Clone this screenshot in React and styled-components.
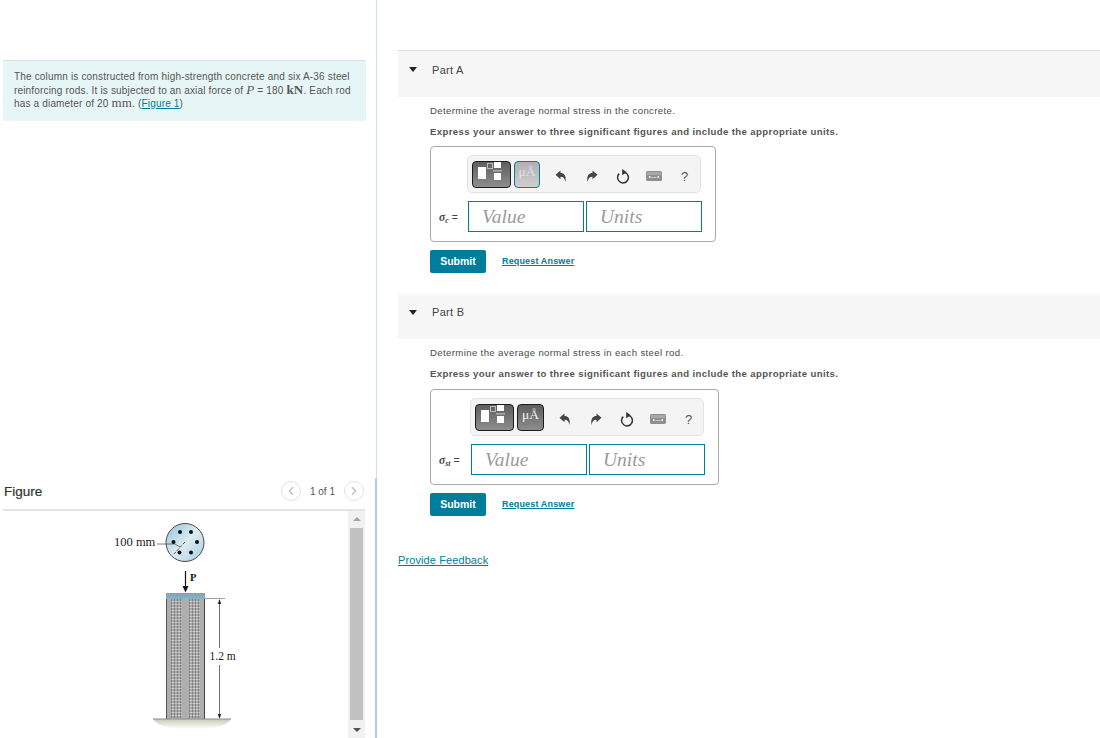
import React from "react";
import styled, { createGlobalStyle } from "styled-components";
import { ChevronLeft, ChevronRight } from "lucide-react";

const GlobalStyle = createGlobalStyle`
  html, body { margin: 0; padding: 0; background: #fff; }
  body { font-family: "Liberation Sans", Arial, sans-serif; color: #565656; }
`;

const Page = styled.div`
  display: flex;
  width: 1100px;
  height: 738px;
  overflow: hidden;
`;

const LeftPanel = styled.div`
  width: 377px;
  flex: none;
  display: flex;
  flex-direction: column;
`;

const IntroArea = styled.div`
  flex: 1;
  padding: 60px 10px 0 3px;
  border-right: 1px solid #d3e0ea;
`;

const Intro = styled.div`
  background: #e6f5f5;
  border-top: 1px solid #d5e3e6;
  height: 61px;
  box-sizing: border-box;
  padding: 9px 10px 0 11px;
  font-size: 10px;
  line-height: 13.5px;
  letter-spacing: 0.17px;
  white-space: nowrap;
`;

const MathSerif = styled.span`
  font-family: "Liberation Serif", serif;
  font-size: 13px;
  line-height: 0;
  font-style: ${(p) => (p.$italic ? "italic" : "normal")};
  font-weight: ${(p) => (p.$bold ? 700 : 400)};
`;

const TextLink = styled.a`
  color: #007c9c;
  text-decoration: underline;
`;

const FigureSection = styled.div`
  height: 260px;
  flex: none;
  box-sizing: border-box;
  padding-left: 3px;
  padding-right: 10px;
  border-right: 2px solid #b9cde0;
  display: flex;
  flex-direction: column;
`;

const FigureHeader = styled.div`
  height: 33px;
  flex: none;
  box-sizing: border-box;
  border-bottom: 2px solid #e4e4e4;
  display: flex;
  align-items: center;
  justify-content: space-between;
  padding: 0 1px 5px 1px;
`;

const FigureTitle = styled.div`
  font-size: 13.5px;
  font-weight: 400;
  color: #333;
  -webkit-text-stroke: 0.2px #333;
`;

const Pager = styled.div`
  display: flex;
  align-items: center;
  gap: 9px;
  font-size: 10px;
  color: #565656;
`;

const PagerButton = styled.div`
  width: 20px;
  height: 20px;
  border: 1px solid #e2e2e2;
  border-radius: 50%;
  box-sizing: border-box;
  display: flex;
  align-items: center;
  justify-content: center;
  color: #bdbdbd;
`;

const FigureBody = styled.div`
  flex: 1;
  display: flex;
  min-height: 0;
`;

const FigureView = styled.div`
  flex: 1;
  min-width: 0;
`;

const FigureSvg = styled.svg`
  display: block;
  width: 345px;
  height: 227px;
`;

const Scrollbar = styled.div`
  width: 17px;
  flex: none;
  background: #f1f1f1;
  display: flex;
  flex-direction: column;
  align-items: center;
  padding-top: 6px;
  box-sizing: border-box;
`;

const ScrollArrow = styled.div`
  width: 0;
  height: 0;
  border-left: 4px solid transparent;
  border-right: 4px solid transparent;
  border-bottom: ${(p) => (p.$down ? "none" : "4px solid #a3a3a3")};
  border-top: ${(p) => (p.$down ? "4px solid #505050" : "none")};
`;

const ScrollThumb = styled.div`
  width: 13px;
  height: 192px;
  background: #c1c1c1;
  margin: 7px 0 8px;
`;

const RightPanel = styled.div`
  flex: 1;
  padding: 50px 0 0 21px;
  min-width: 0;
`;

const PartHeader = styled.div`
  height: ${(p) => p.$height}px;
  box-sizing: border-box;
  background: #f7f7f7;
  border-top: ${(p) => (p.$ruled ? "1px solid #dcdcdc" : "none")};
  display: flex;
  align-items: center;
  padding: 0 0 9px 11px;
  font-size: 11px;
  letter-spacing: 0.3px;
  color: #444;
`;

const Caret = styled.div`
  width: 0;
  height: 0;
  border-left: 4px solid transparent;
  border-right: 4px solid transparent;
  border-top: 5px solid #222;
  margin-right: 15px;
`;

const PartBody = styled.div`
  padding: 7px 0 0 32px;
  height: ${(p) => p.$height}px;
  box-sizing: border-box;
`;

const Prompt = styled.div`
  font-size: 9.6px;
  line-height: 13px;
  letter-spacing: 0.37px;
  color: #4a4a4a;
`;

const Instruction = styled(Prompt)`
  margin-top: 8px;
  font-weight: 700;
  color: #555;
  letter-spacing: 0.385px;
`;

const AnswerBox = styled.div`
  display: inline-grid;
  grid-template-columns: auto 235px;
  column-gap: 8px;
  row-gap: 8px;
  align-items: center;
  margin-top: ${(p) => p.$top}px;
  padding: 8px 13px 9px 8px;
  border: 1px solid #aaa;
  border-radius: 4px;
`;

const Toolbar = styled.div`
  grid-column: 2;
  width: 234px;
  height: 38px;
  box-sizing: border-box;
  background: #f4f4f4;
  border: 1px solid #e3e3e3;
  border-radius: 5px;
  display: flex;
  align-items: center;
  padding-left: 4px;
`;

const TemplateButton = styled.div`
  width: 39px;
  height: 27px;
  flex: none;
  box-sizing: border-box;
  border: 1px solid #1c1c1c;
  border-radius: 4px;
  background: linear-gradient(#5e5e5e, #8d8d8d);
  display: flex;
  align-items: center;
  justify-content: center;
`;

const SymbolButton = styled.div`
  width: ${(p) => (p.$active ? 27 : 26)}px;
  height: 27px;
  flex: none;
  margin-left: 3px;
  box-sizing: border-box;
  border: 1px solid ${(p) => (p.$active ? "#1c1c1c" : "#007c9c")};
  border-radius: 4px;
  background: ${(p) =>
    p.$active ? "linear-gradient(#5e5e5e, #8d8d8d)" : "linear-gradient(#b0b0b0, #cfcfcf)"};
  color: ${(p) => (p.$active ? "#f2f2f2" : "#e2e2e2")};
  font-family: "Liberation Serif", serif;
  font-size: 13.5px;
  line-height: 20px;
  text-align: center;
`;

const ToolIcons = styled.div`
  display: grid;
  flex: none;
  grid-template-columns: repeat(5, 31px);
  justify-items: center;
  align-items: center;
  margin-left: 5px;
  padding-top: 4px;
`;

const HelpMark = styled.span`
  font-size: 13px;
  color: #555;
`;

const SymbolLabel = styled.div`
  width: ${(p) => p.$width}px;
  font-family: "Liberation Serif", serif;
  font-size: 11.5px;
  font-style: italic;
  color: #444;
  white-space: nowrap;
  font-weight: 700;
`;

const SymbolSub = styled.sub`
  font-size: 8px;
  vertical-align: -2px;
  line-height: 0;
`;

const Equals = styled.span`
  font-family: "Liberation Sans", sans-serif;
  font-style: normal;
  font-weight: 400;
  font-size: 10.5px;
`;

const Inputs = styled.div`
  display: flex;
  gap: 2px;
  margin-left: 1px;
`;

const FieldBox = styled.div`
  width: 116px;
  height: 31px;
  box-sizing: border-box;
  border: 1px solid #007c9c;
  padding-left: 13px;
  font-family: "Liberation Serif", serif;
  font-style: italic;
  font-size: 19.5px;
  line-height: 29px;
  color: #9a9a9a;
`;

const Actions = styled.div`
  display: flex;
  align-items: center;
  margin-top: 8px;
  gap: 16px;
`;

const SubmitButton = styled.div`
  width: 56px;
  height: 23px;
  background: #007c9c;
  border-radius: 2px;
  color: #fff;
  font-size: 10.5px;
  font-weight: 700;
  line-height: 23px;
  text-align: center;
`;

const RequestLink = styled(TextLink)`
  font-size: 9px;
  font-weight: 700;
  letter-spacing: 0.15px;
  margin-top: -2px;
`;

const Feedback = styled(TextLink)`
  display: block;
  font-size: 11px;
  letter-spacing: 0.1px;
`;

const TemplateIcon = () => (
  <svg width="37" height="25" viewBox="0 0 37 25">
    <rect x="5" y="5" width="8" height="12" fill="#fff" />
    <rect x="14.5" y="1.5" width="5" height="5" fill="none" stroke="#bbb" />
    <rect x="21" y="0" width="7" height="6" fill="#fff" />
    <rect x="20" y="8" width="9" height="1.5" fill="#aaa" />
    <rect x="21" y="11" width="7" height="7" fill="#fff" />
  </svg>
);

const UndoIcon = ({ flip }) => (
  <svg width="12" height="13" viewBox="0 0 12 13" style={flip ? { transform: "scaleX(-1)" } : undefined}>
    <path d="M0.5 4.8 L5.5 0.5 V3 C9 3 11.5 5.5 10.5 12 C9.8 8.5 8.5 6.8 5.5 6.8 V9.2 Z" fill="#444" />
  </svg>
);

const ResetIcon = () => (
  <svg width="14" height="15" viewBox="0 0 14 15">
    <path d="M8.8 3.4 A5.4 5.4 0 1 1 3.2 4.6" fill="none" stroke="#333" strokeWidth="1.5" />
    <path d="M6.2 0 L10.8 3.2 L6.2 6.2 Z" fill="#333" />
  </svg>
);

const KeyboardIcon = () => (
  <svg width="16" height="10" viewBox="0 0 16 10">
    <rect x="0" y="0" width="16" height="10" rx="1.5" fill="#8f8f8f" />
    <rect x="1" y="1" width="14" height="3" fill="#a8a8a8" />
    <rect x="3" y="5" width="1.5" height="2" fill="#eee" />
    <rect x="5.5" y="6" width="5" height="1" fill="#ccc" />
    <rect x="11.5" y="5" width="1.5" height="2" fill="#eee" />
  </svg>
);

const AnswerPart = ({ symbol, sub, labelWidth, boxTop, prompt, active }) => (
  <>
    <Prompt>{prompt}</Prompt>
    <Instruction>Express your answer to three significant figures and include the appropriate units.</Instruction>
    <AnswerBox $top={boxTop}>
      <Toolbar>
        <TemplateButton><TemplateIcon /></TemplateButton>
        <SymbolButton $active={active}>μÅ</SymbolButton>
        <ToolIcons>
          <UndoIcon />
          <UndoIcon flip />
          <ResetIcon />
          <KeyboardIcon />
          <HelpMark>?</HelpMark>
        </ToolIcons>
      </Toolbar>
      <SymbolLabel $width={labelWidth}>
        {symbol}<SymbolSub>{sub}</SymbolSub> <Equals>=</Equals>
      </SymbolLabel>
      <Inputs>
        <FieldBox>Value</FieldBox>
        <FieldBox>Units</FieldBox>
      </Inputs>
    </AnswerBox>
    <Actions>
      <SubmitButton>Submit</SubmitButton>
      <RequestLink href="#">Request Answer</RequestLink>
    </Actions>
  </>
);

const ColumnFigure = () => (
  <FigureSvg viewBox="3 511 345 227">
    <defs>
      <linearGradient id="disc" x1="0" y1="0" x2="1" y2="1">
        <stop offset="0%" stopColor="#8fc0d8" />
        <stop offset="50%" stopColor="#dcecf4" />
        <stop offset="100%" stopColor="#a4cde0" />
      </linearGradient>
      <linearGradient id="cap" x1="0" y1="0" x2="0" y2="1">
        <stop offset="0%" stopColor="#8c9fa8" />
        <stop offset="100%" stopColor="#7fb6d2" />
      </linearGradient>
      <pattern id="rebar" width="3" height="3" patternUnits="userSpaceOnUse" x="0" y="599">
        <rect width="3" height="3" fill="#a9a9a9" />
        <rect width="1" height="2" fill="#7d7d7d" />
        <rect x="1" y="2" width="2" height="1" fill="#c8c8c8" />
      </pattern>
      <linearGradient id="ground" x1="0" y1="0" x2="0" y2="1">
        <stop offset="0%" stopColor="#c9c9b8" />
        <stop offset="100%" stopColor="#ffffff" />
      </linearGradient>
    </defs>

    <text x="114" y="546" fontFamily="Liberation Serif, serif" fontSize="12.5" fill="#222">100 mm</text>
    <circle cx="185" cy="542.5" r="19" fill="url(#disc)" stroke="#4a4a4a" strokeWidth="1" />
    <polyline points="157,544 175,544 180,547" fill="none" stroke="#555" strokeWidth="0.8" />
    {[[180, 532], [191, 532], [197, 542], [191, 552.5], [179.5, 552.5], [173.5, 542]].map(([x, y]) => (
      <circle key={`${x}-${y}`} cx={x} cy={y} r="2" fill="#111" />
    ))}
    <line x1="185" y1="542" x2="173" y2="555" stroke="#222" strokeWidth="0.8" strokeDasharray="3 1.5" />

    <line x1="185.5" y1="571" x2="185.5" y2="588" stroke="#111" strokeWidth="1.2" />
    <path d="M182.5 586 L188.5 586 L185.5 592.5 Z" fill="#111" />
    <text x="190" y="581" fontFamily="Liberation Serif, serif" fontSize="10.5" fontWeight="700" fill="#111">P</text>

    <rect x="166" y="599" width="39" height="120" fill="#aeaeae" />
    <rect x="171" y="599" width="11" height="120" fill="url(#rebar)" />
    <rect x="189" y="599" width="11" height="120" fill="url(#rebar)" />
    <line x1="166.5" y1="599" x2="166.5" y2="719" stroke="#555" />
    <line x1="204.5" y1="599" x2="204.5" y2="719" stroke="#444" />
    <rect x="166" y="593" width="39" height="6" fill="url(#cap)" />

    <line x1="205" y1="598.5" x2="225" y2="598.5" stroke="#777" strokeWidth="0.7" />
    <line x1="219.5" y1="600" x2="219.5" y2="648" stroke="#333" strokeWidth="0.7" />
    <line x1="219.5" y1="665" x2="219.5" y2="718" stroke="#333" strokeWidth="0.7" />
    <path d="M217.8 604 L221.2 604 L219.5 599 Z" fill="#222" />
    <path d="M217.8 714 L221.2 714 L219.5 719 Z" fill="#222" />
    <text x="209.5" y="660" fontFamily="Liberation Serif, serif" fontSize="11.5" fill="#222">1.2 m</text>

    <path d="M153 719 H231 C226 726 218 729 192 729 C166 729 158 726 153 719 Z" fill="url(#ground)" />
    <line x1="153" y1="719" x2="231" y2="719" stroke="#8d8d80" />
  </FigureSvg>
);

export default function App() {
  return (
    <>
      <GlobalStyle />
      <Page>
        <LeftPanel>
          <IntroArea>
            <Intro>
              The column is constructed from high-strength concrete and six A-36 steel<br />
              reinforcing rods. It is subjected to an axial force of <MathSerif $italic>P</MathSerif> = 180 <MathSerif $bold>kN</MathSerif>. Each rod<br />
              has a diameter of 20 <MathSerif>mm</MathSerif>. (<TextLink href="#">Figure 1</TextLink>)
            </Intro>
          </IntroArea>
          <FigureSection>
            <FigureHeader>
              <FigureTitle>Figure</FigureTitle>
              <Pager>
                <PagerButton><ChevronLeft size={14} /></PagerButton>
                <span>1 of 1</span>
                <PagerButton><ChevronRight size={14} /></PagerButton>
              </Pager>
            </FigureHeader>
            <FigureBody>
              <FigureView><ColumnFigure /></FigureView>
              <Scrollbar>
                <ScrollArrow />
                <ScrollThumb />
                <ScrollArrow $down />
              </Scrollbar>
            </FigureBody>
          </FigureSection>
        </LeftPanel>
        <RightPanel>
          <PartHeader $height={47} $ruled><Caret />Part A</PartHeader>
          <PartBody $height={197}>
            <AnswerPart symbol="σ" sub="c" labelWidth={20} boxTop={8} prompt="Determine the average normal stress in the concrete." />
          </PartBody>
          <PartHeader $height={45}><Caret />Part B</PartHeader>
          <PartBody $height={215}>
            <AnswerPart symbol="σ" sub="st" labelWidth={23} boxTop={9} active prompt="Determine the average normal stress in each steel rod." />
          </PartBody>
          <Feedback href="#">Provide Feedback</Feedback>
        </RightPanel>
      </Page>
    </>
  );
}
